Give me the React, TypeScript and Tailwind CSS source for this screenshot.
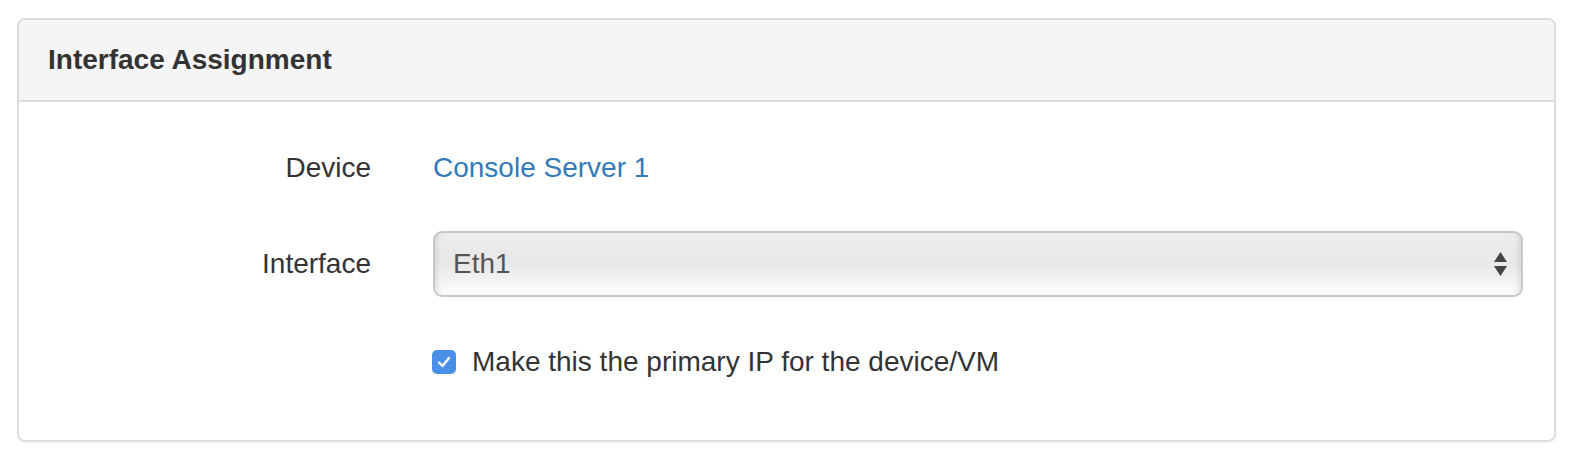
export default function App() {
  return (
    <div className="min-h-[460px] bg-white pt-[18px] pl-[17px]" style={{ fontFamily: '"Liberation Sans", Arial, sans-serif' }}>
      <div className="w-[1539px] rounded-[8px] border-2 border-[#dddddd] bg-white shadow-[0_1px_2px_rgba(0,0,0,0.05)] overflow-hidden">
        <div className="flex h-[82px] items-center border-b-2 border-[#dddddd] bg-[#f5f5f5] px-[29px]">
          <h3 className="text-[28px] font-bold text-[#333333]">Interface Assignment</h3>
        </div>
        <div className="pt-[33px] pb-[58px]">
          <div className="grid grid-cols-[352px_1fr] gap-x-[62px] gap-y-[30px] pr-[31px]">
            <div className="flex h-[66px] items-center justify-end text-[28px] text-[#333333]">Device</div>
            <div className="flex h-[66px] items-center">
              <a href="#" className="text-[28px] text-[#337ab7]">Console Server 1</a>
            </div>

            <div className="flex h-[66px] items-center justify-end text-[28px] text-[#333333]">Interface</div>
            <div className="relative flex h-[66px] items-center rounded-[9px] border-2 border-[#c8c8c8] bg-gradient-to-b from-[#ececec] via-[#e8e8e8] to-[#fcfcfc] pl-[18px] shadow-[inset_6px_0_6px_-5px_rgba(0,0,0,0.12),inset_-6px_0_6px_-5px_rgba(0,0,0,0.12)]">
              <span className="text-[28px] text-[#555555]">Eth1</span>
              <svg className="absolute right-[14px] top-1/2 -translate-y-1/2" width="13" height="24" viewBox="0 0 13 24">
                <path d="M6.5 0 L13 10 L0 10 Z" fill="#444444" />
                <path d="M0 14 L13 14 L6.5 24 Z" fill="#444444" />
              </svg>
            </div>
          </div>
          <div className="mt-[45px] flex h-[40px] items-center pl-[413px]">
            <span className="flex h-[24px] w-[24px] items-center justify-center rounded-[5px] bg-[#4a8fe7]">
              <svg width="16" height="16" viewBox="0 0 16 16">
                <path d="M3 8.5 L6.5 12 L13 4" fill="none" stroke="white" strokeWidth="2.4" strokeLinecap="round" strokeLinejoin="round" />
              </svg>
            </span>
            <span className="ml-[16px] text-[28px] text-[#333333]">Make this the primary IP for the device/VM</span>
          </div>
        </div>
      </div>
    </div>
  )
}
